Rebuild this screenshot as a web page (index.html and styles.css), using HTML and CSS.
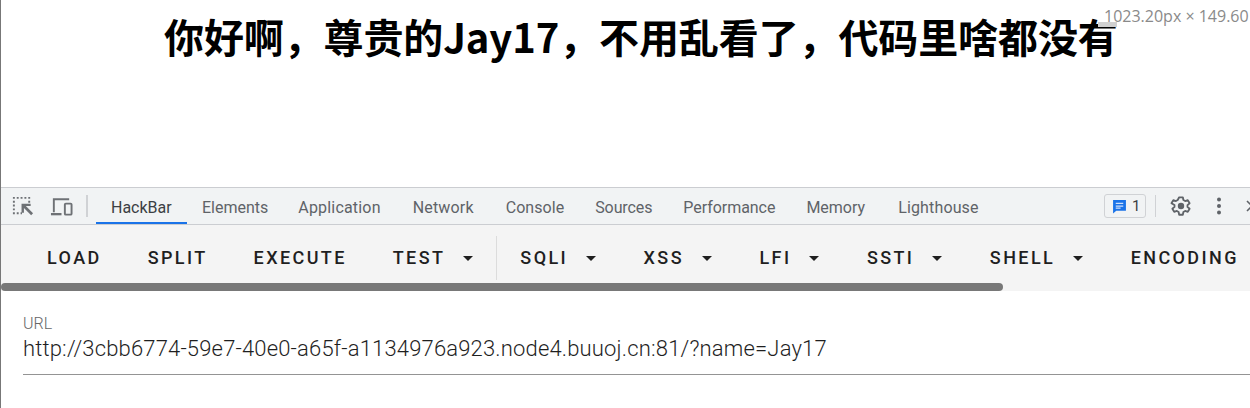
FILE: index.html
```html
<!DOCTYPE html>
<html lang="zh">
<head>
<meta charset="utf-8">
<title>HackBar</title>
<link rel="stylesheet" href="styles.css">
</head>
<body>
<div class="page">
  <header class="viewport">
    <h1>你好啊，尊贵的Jay17，不用乱看了，代码里啥都没有</h1>
    <div class="dim-bar"></div>
    <div class="dim">1023.20px × 149.60</div>
  </header>
  <nav class="tabs">
    <svg class="ico first" viewBox="0 0 24 24"><path d="M2 2h2v2H2zM6 2h2v2H6zM10 2h2v2h-2zM14 2h2v2h-2zM18 2h2v2h-2zM2 6h2v2H2zM18 6h2v2h-2zM2 10h2v2H2zM2 14h2v2H2zM2 18h2v2H2zM6 18h2v2H6zM10 18h1.500v2H10z" fill="#6e7175"/><path d="M11 9h9.500v2.600h-5l7.500 7.500-2 2-7.500-7.500v5H11z" fill="#6e7175"/></svg>
    <svg class="ico second" viewBox="0 0 24 24" fill="none" stroke="#6e7175" stroke-width="2"><path d="M4 18V4.500h16"/><path d="M1 20h11" stroke-width="2.400"/><rect x="15.500" y="9" width="7" height="11.500" rx="1"/></svg>
    <span class="sep"></span>
    <span class="tab active">HackBar</span>
    <span class="tab t1">Elements</span>
    <span class="tab t2">Application</span>
    <span class="tab t3">Network</span>
    <span class="tab t4">Console</span>
    <span class="tab t5">Sources</span>
    <span class="tab t6">Performance</span>
    <span class="tab t7">Memory</span>
    <span class="tab t8">Lighthouse</span>
    <span class="badge">
      <svg viewBox="0 0 14 14"><path d="M1 1h12v10H4l-3 2.500z" fill="#1a73e8"/><path d="M3.500 3.500h7v1.200h-7zM3.500 6h7v1.200h-7zM3.500 8h4.500v1h-4.500z" fill="#cfe0fa"/></svg>
      <span>1</span>
    </span>
    <span class="sep sep2"></span>
    <svg class="gear" viewBox="0 0 24 24"><path fill="none" stroke="#5f6368" stroke-width="2" d="M10 2.500h4l.6 3 1.900 1.100 2.900-1 2 3.400-2.300 2v2l2.300 2-2 3.400-2.900-1-1.900 1.100-.6 3h-4l-.6-3-1.900-1.100-2.900 1-2-3.400 2.300-2v-2L1.600 9l2-3.400 2.900 1 1.900-1.100z" stroke-linejoin="round"/><circle cx="12" cy="12" r="3.500" fill="#5f6368"/></svg>
    <svg class="more" viewBox="0 0 6 20"><circle cx="3" cy="3.500" r="2" fill="#5f6368"/><circle cx="3" cy="10" r="2" fill="#5f6368"/><circle cx="3" cy="16.500" r="2" fill="#5f6368"/></svg>
    <svg class="close" viewBox="0 0 12 12"><path d="M1 1l10 10M11 1L1 11" stroke="#5f6368" stroke-width="1.600"/></svg>
  </nav>
  <div class="toolbar">
    <span class="btn b-first">LOAD</span>
    <span class="btn">SPLIT</span>
    <span class="btn">EXECUTE</span>
    <span class="btn">TEST<i class="caret"></i></span>
    <span class="vsep"></span>
    <span class="btn b-sqli">SQLI<i class="caret"></i></span>
    <span class="btn">XSS<i class="caret"></i></span>
    <span class="btn">LFI<i class="caret"></i></span>
    <span class="btn">SSTI<i class="caret"></i></span>
    <span class="btn">SHELL<i class="caret"></i></span>
    <span class="btn">ENCODING</span>
  </div>
  <div class="scroll"><div class="thumb"></div></div>
  <section class="field">
    <label>URL</label>
    <div class="value">http://3cbb6774-59e7-40e0-a65f-a1134976a923.node4.buuoj.cn:81/?name=Jay17</div>
  </section>
</div>
</body>
</html>
```
FILE: styles.css
```css
* { box-sizing: border-box; }
html, body { margin: 0; padding: 0; background: #fff; overflow: hidden; }
.page {
  width: 1250px; height: 408px; overflow: hidden;
  border-left: 1px solid #777;
  display: flex; flex-direction: column;
  font-family: Roboto, sans-serif;
}
.viewport { position: relative; height: 188px; flex: none; border-bottom: 1px solid #cbcdd1; padding-left: 163px; }
h1 {
  margin: 0; padding-top: 7px;
  font: 700 40px/58px "Noto Sans CJK SC", sans-serif;
  letter-spacing: -0.11px;
  color: #000; white-space: nowrap;
}
.dim { position: absolute; left: 1103px; top: 5px; font: 16px/22px "Open Sans", sans-serif; color: #8a8a8a; white-space: nowrap; }
.dim-bar { position: absolute; left: 1097px; top: 22px; width: 19px; height: 5px; background: #d0d0d0; }
.tabs {
  height: 37px; flex: none; background: #f1f3f4; border-bottom: 1px solid #cbcdd1;
  display: flex; align-items: center; white-space: nowrap;
  font: 16px/20px Roboto, sans-serif; color: #5f6368;
}
.ico { width: 23px; height: 23px; flex: none; }
.first { margin-left: 10px; }
.second { margin-left: 16px; }
.sep { width: 2px; height: 22px; background: #d0d2d5; margin-left: 13px; flex: none; }
.tab { height: 36px; padding-top: 10px; flex: none; }
.active { color: #3c4043; margin-left: 8px; padding: 10px 15px 0; width: 91px; border-bottom: 2px solid #1a73e8; }
.t1 { margin-left: 15px; }
.t2 { margin-left: 30px; letter-spacing: .18px; }
.t3 { margin-left: 32px; letter-spacing: .18px; }
.t4 { margin-left: 32px; letter-spacing: .05px; }
.t5 { margin-left: 31px; letter-spacing: -.1px; }
.t6 { margin-left: 31px; letter-spacing: -.05px; }
.t7 { margin-left: 31px; }
.t8 { margin-left: 33px; letter-spacing: .15px; }
.badge {
  position: absolute; left: 1104px; top: 194px; width: 42px; height: 24px;
  border: 1px solid #d0d2d5; border-radius: 3px;
  display: flex; align-items: center; gap: 5px; padding-left: 7px; color: #3c4043;
  font-size: 15px;
}
.badge svg { width: 15px; height: 15px; }
.sep2 { position: absolute; left: 1155px; top: 195px; width: 1px; margin: 0; }
.gear { position: absolute; left: 1170px; top: 195px; width: 22px; height: 22px; }
.more { position: absolute; left: 1216px; top: 196px; width: 6px; height: 20px; }
.close { position: absolute; left: 1246px; top: 200px; width: 12px; height: 12px; }
.toolbar {
  height: 66px; flex: none; background: #f4f4f4;
  display: flex; align-items: center; white-space: nowrap;
  font: 500 18px/20px Roboto, sans-serif; letter-spacing: 2.4px; color: #1f1f1f;
}
.btn { flex: none; display: flex; align-items: center; margin-left: 46px; }
.caret { display: inline-block; width: 0; height: 0; margin: 0 1.5px 0 18px; border: 5px solid transparent; border-top: 5px solid #1f1f1f; border-bottom: 0; }
.vsep { width: 1px; height: 44px; background: #dcdcdc; margin-left: 21.5px; flex: none; }
.btn.b-sqli { margin-left: 23px; }
.scroll { height: 8px; flex: none; background: #f4f4f4; margin-top: -8px; position: relative; }
.thumb { width: 1002px; height: 8px; background: #787878; border-radius: 4px; }
.field { margin: 24px 0 0 22px; height: 60px; border-bottom: 1px solid #949494; }
.field label { display: block; font: 300 16px/17px Roboto, sans-serif; color: #666; }
.value { font: 300 22px/34px Roboto, sans-serif; letter-spacing: .165px; color: #1f1f1f; white-space: nowrap; }
```
